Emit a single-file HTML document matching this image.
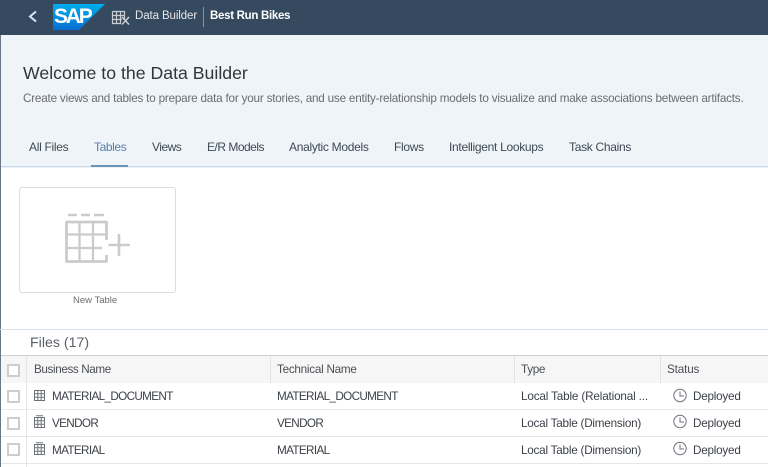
<!DOCTYPE html>
<html><head><meta charset="utf-8">
<style>
html,body{margin:0;padding:0;background:#fff}
#p{position:relative;width:768px;height:467px;overflow:hidden;background:#fff;font-family:"Liberation Sans",sans-serif;filter:blur(.35px)}
.t{position:absolute;white-space:nowrap;line-height:16px;color:#32363a}
.a{position:absolute}
.tab{font-size:12px;top:139px;color:#3f4a54;letter-spacing:-.3px}
.h{font-size:11.7px;top:362px;color:#4a4f55;letter-spacing:-.3px}
.c{font-size:11.7px;color:#3c4148;letter-spacing:-.22px}
.u{letter-spacing:-.64px}
.cb{position:absolute;left:7px;width:9px;height:9px;border:2px solid #cdcdcd;background:#fff}
</style></head><body>
<div id="p">
<div class="a" style="left:0;top:0;width:768px;height:35px;background:#354a5f"></div>
<svg class="a" style="left:0;top:0" width="150" height="35" viewBox="0 0 150 35">
<path d="M36 11.500L30 16.500L36 21.500" fill="none" stroke="#d1e8ff" stroke-width="2"/>
<defs><linearGradient id="g" x1="0" y1="0" x2="0" y2="1"><stop offset="0" stop-color="#00aeef"/><stop offset="1" stop-color="#0a6ed1"/></linearGradient></defs>
<path d="M53 4H105L79 30H53Z" fill="url(#g)"/>
<g fill="none" stroke="#c9ccd0" stroke-width="1.200">
<path d="M112.500 11.500H124.500V19M112.500 11.500V23.500H121M116.500 11.500V23.500M120.500 11.500V23.500M112.500 15.500H124.500M112.500 19.500H122"/>
<path d="M122 17L129 24.500M129 17L122 24.500" stroke-width="1.500"/>
</g>
</svg>
<div class="t" style="left:54px;top:7px;font-size:21px;line-height:20px;font-weight:bold;color:#fff;letter-spacing:-2.200px;">SAP</div>
<div class="t" style="left:135px;top:8px;font-size:11.500px;color:#e4e7ea;letter-spacing:-.1px">Data Builder</div>
<div class="a" style="left:203px;top:7px;width:1px;height:20px;background:#8794a1"></div>
<div class="t" style="left:210px;top:8px;font-size:11.500px;font-weight:bold;color:#fff;letter-spacing:-.3px">Best Run Bikes</div>

<div class="a" style="left:0;top:35px;width:768px;height:131px;background:#eff4f9"></div>
<div class="a" style="left:0;top:166px;width:768px;height:1px;background:#c9d9ea"></div>
<div class="a" style="left:0;top:167px;width:768px;height:1px;background:#ebf1f7"></div>
<div class="a" style="left:0;top:35px;width:1px;height:432px;background:#6a7786"></div>

<div class="t" style="left:23px;top:62px;font-size:17.700px;line-height:22px;color:#32363a">Welcome to the Data Builder</div>
<div class="t" style="left:23px;top:91px;font-size:11.700px;color:#6a6d70;letter-spacing:-.2px">Create views and tables to prepare data for your stories, and use entity-relationship models to visualize and make associations between artifacts.</div>

<div class="t tab" style="left:29px">All Files</div>
<div class="t tab" style="left:94px;color:#5b7fa5;letter-spacing:-.4px">Tables</div>
<div class="a" style="left:91px;top:165px;width:37px;height:2px;background:#6b93ba"></div>
<div class="t tab" style="left:152px;letter-spacing:-.5px">Views</div>
<div class="t tab" style="left:207px;letter-spacing:-.5px">E/R Models</div>
<div class="t tab" style="left:289px">Analytic Models</div>
<div class="t tab" style="left:394px">Flows</div>
<div class="t tab" style="left:449px">Intelligent Lookups</div>
<div class="t tab" style="left:569px">Task Chains</div>

<div class="a" style="left:19px;top:187px;width:155px;height:104px;border:1px solid #dcdcdc;border-radius:3px;background:#fff"></div>
<svg class="a" style="left:60px;top:208px" width="75" height="60" viewBox="60 208 75 60">
<g fill="none" stroke="#cbcbcb" stroke-width="2.800">
<path d="M68 215H77M81 215H90M94 215H104" stroke-width="2.400"/>
<path d="M106.500 240V222H66.500V261.500H106.500V255" stroke-linejoin="round"/>
<path d="M79.500 222V261M93 222V261M67 234.500H106M67 248H102" stroke-width="2.300"/>
<path d="M108.500 245H130M119 234V256" stroke-width="2.600"/>
</g>
</svg>
<div class="t" style="left:73px;top:293px;font-size:9.500px;color:#6a6d70">New Table</div>

<div class="a" style="left:0;top:329px;width:768px;height:1px;background:#d5dfea"></div>
<div class="t" style="left:30px;top:334px;font-size:14.200px;line-height:18px;color:#5a6068">Files (17)</div>

<div class="a" style="left:1px;top:355px;width:767px;height:1px;background:#d0d0d0"></div>
<div class="a" style="left:1px;top:356px;width:767px;height:27px;background:#f6f6f6"></div>
<div class="a" style="left:1px;top:383px;width:767px;height:27px;background:#fff"></div>
<div class="a" style="left:1px;top:409px;width:767px;height:1px;background:#eaeaea"></div>
<div class="a" style="left:1px;top:436px;width:767px;height:1px;background:#e6e6e6"></div>
<div class="a" style="left:1px;top:463px;width:767px;height:1px;background:#e6e6e6"></div>
<div class="a" style="left:26px;top:356px;width:1px;height:111px;background:#e6e6e6"></div>
<div class="a" style="left:270px;top:356px;width:1px;height:27px;background:#e2e2e2"></div>
<div class="a" style="left:514px;top:356px;width:1px;height:27px;background:#e2e2e2"></div>
<div class="a" style="left:660px;top:356px;width:1px;height:27px;background:#e2e2e2"></div>

<div class="cb" style="top:364px"></div>
<div class="cb" style="top:390px"></div>
<div class="cb" style="top:417px"></div>
<div class="cb" style="top:443px"></div>

<div class="t h" style="left:34px;letter-spacing:-.38px">Business Name</div>
<div class="t h" style="left:277px;letter-spacing:-.25px">Technical Name</div>
<div class="t h" style="left:521px">Type</div>
<div class="t h" style="left:667px;letter-spacing:-.15px">Status</div>

<svg class="a" style="left:0;top:380px" width="768" height="87" viewBox="0 380 768 87">
<g fill="none" stroke="#6c7278" stroke-width="1">
<path d="M34.500 390.500H44.500V400.500H34.500ZM37.800 390.500V400.500M41.200 390.500V400.500M34.500 393.800H44.500M34.500 397.200H44.500"/>
<path d="M34.500 417.500H44.500V427.500H34.500ZM37.800 417.500V427.500M41.200 417.500V427.500M34.500 420.800H44.500M34.500 424.200H44.500M36 415.800H43"/>
<path d="M34.500 444.500H44.500V454.500H34.500ZM37.800 444.500V454.500M41.200 444.500V454.500M34.500 447.800H44.500M34.500 451.200H44.500M36 442.800H43"/>
<circle cx="680" cy="395.500" r="6.200"/><path d="M680 391.500V396H684"/>
<circle cx="680" cy="421.500" r="6.200"/><path d="M680 417.500V422H684"/>
<circle cx="680" cy="448.500" r="6.200"/><path d="M680 444.500V449H684"/>
</g>
</svg>

<div class="t c u" style="left:52px;top:389px">MATERIAL_DOCUMENT</div>
<div class="t c u" style="left:277px;top:389px">MATERIAL_DOCUMENT</div>
<div class="t c" style="left:521px;top:389px;letter-spacing:-.15px">Local Table (Relational ...</div>
<div class="t c" style="left:693px;top:389px">Deployed</div>

<div class="t c u" style="left:52px;top:416px">VENDOR</div>
<div class="t c u" style="left:277px;top:416px">VENDOR</div>
<div class="t c" style="left:521px;top:416px">Local Table (Dimension)</div>
<div class="t c" style="left:693px;top:416px">Deployed</div>

<div class="t c u" style="left:52px;top:443px">MATERIAL</div>
<div class="t c u" style="left:277px;top:443px">MATERIAL</div>
<div class="t c" style="left:521px;top:443px">Local Table (Dimension)</div>
<div class="t c" style="left:693px;top:443px">Deployed</div>
</div>
</body></html>
